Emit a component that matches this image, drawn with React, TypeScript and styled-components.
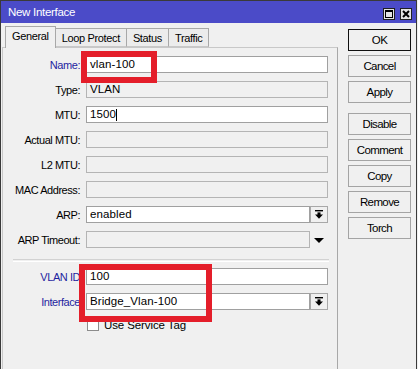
import React from "react";
import styled, { createGlobalStyle } from "styled-components";

const GlobalStyle = createGlobalStyle`
  html, body {
    margin: 0;
    padding: 0;
    background: #f0f0f0;
  }
  body {
    font-family: "Liberation Sans", Arial, sans-serif;
    font-size: 11px;
    color: #000;
  }
`;

const Window = styled.div`
  position: relative;
  width: 417px;
  height: 369px;
  box-sizing: border-box;
  border: 1px solid #3a3a3a;
  border-bottom: none;
  background: #f0f0f0;
  display: flex;
  flex-direction: column;
  overflow: hidden;
`;

const TitleBar = styled.div`
  height: 22px;
  flex-shrink: 0;
  background: #4b4bc8;
  display: flex;
  align-items: center;
  padding: 0 4px 0 7px;
  color: #fff;
  font-size: 11.5px;
  letter-spacing: -0.3px;
`;

const Title = styled.span`
  flex: 1;
`;

const TitleButtons = styled.div`
  display: flex;
  gap: 5px;
  margin-top: 3px;
`;

const TitleButton = styled.div`
  width: 12px;
  height: 12px;
  box-sizing: border-box;
  border: 1px solid #202020;
  background: #e4e4e4;
  display: flex;
  align-items: center;
  justify-content: center;
`;

const Body = styled.div`
  flex: 1;
  display: flex;
`;

const LeftPane = styled.div`
  width: 336px;
  padding-left: 1px;
  display: flex;
  flex-direction: column;
`;

const TabRow = styled.div`
  height: 24px;
  display: flex;
  align-items: flex-end;
  padding-left: 3px;
  position: relative;
  z-index: 1;
`;

const Tab = styled.div<{ $active?: boolean }>`
  height: ${(p) => (p.$active ? "22px" : "19px")};
  margin-bottom: ${(p) => (p.$active ? "-1px" : "0")};
  box-sizing: border-box;
  padding: 0 6px;
  display: flex;
  align-items: center;
  border: 1px solid #a8a8a8;
  border-left: ${(p) => (p.$active ? "1px solid #a8a8a8" : "none")};
  border-bottom: ${(p) => (p.$active ? "none" : "1px solid #c8c8c8")};
  background: ${(p) => (p.$active ? "#f0f0f0" : "#ececec")};
  letter-spacing: -0.35px;
  padding-bottom: ${(p) => (p.$active ? "3px" : "0")};
`;

const Panel = styled.div`
  flex: 1;
  box-sizing: border-box;
  border-top: 1px solid #c8c8c8;
  border-left: 1px solid #c8c8c8;
  border-right: 1px solid #a8a8a8;
  padding: 8px 8px 0 0;
  display: flex;
  flex-direction: column;
`;

const Group = styled.div`
  display: flex;
  flex-direction: column;
  gap: 8px;
`;

const Row = styled.div`
  display: grid;
  grid-template-columns: 77px 242px;
  column-gap: 6px;
  align-items: center;
  height: 17px;
`;

const Label = styled.div<{ $accent?: boolean }>`
  text-align: right;
  white-space: nowrap;
  letter-spacing: -0.45px;
  color: ${(p) => (p.$accent ? "#1f1fa0" : "#000")};
`;

const FieldGroup = styled.div`
  display: flex;
  height: 17px;
`;

const Field = styled.div<{ $disabled?: boolean }>`
  flex: 1;
  height: 17px;
  box-sizing: border-box;
  border: 1px solid ${(p) => (p.$disabled ? "#b4b4b4" : "#a0a0a0")};
  background: ${(p) => (p.$disabled ? "#f0f0f0" : "#fff")};
  padding-left: 3px;
  font-size: 11.5px;
  letter-spacing: 0.1px;
  line-height: 15px;
  white-space: nowrap;
  overflow: hidden;
  display: flex;
  align-items: center;
`;

const Caret = styled.span`
  display: inline-block;
  width: 1px;
  height: 12px;
  background: #000;
`;

const DropButton = styled.div`
  width: 18px;
  height: 17px;
  box-sizing: border-box;
  border: 1px solid #a8a8a8;
  background: #f0f0f0;
  display: flex;
  align-items: center;
  justify-content: center;
`;

const ArrowSlot = styled.div`
  width: 18px;
  height: 17px;
  display: flex;
  align-items: center;
  justify-content: center;
  padding-top: 1px;
`;

const Separator = styled.div`
  margin: 11px 0 6px 10px;
  height: 1px;
  border-top: 1px solid #d2d2d2;
  border-bottom: 1px solid #ffffff;
`;

const CheckRow = styled.div`
  display: flex;
  align-items: center;
  gap: 5px;
  margin-left: 84px;
  height: 14px;
  font-size: 11.5px;
  letter-spacing: -0.1px;
`;

const CheckBox = styled.div`
  width: 12px;
  height: 12px;
  box-sizing: border-box;
  border: 1px solid #8c8c8c;
  background: #fff;
`;

const ButtonColumn = styled.div`
  margin-left: 10px;
  padding-top: 6px;
  display: flex;
  flex-direction: column;
  gap: 4px;
`;

const Button = styled.div<{ $default?: boolean; $spaced?: boolean }>`
  width: 63px;
  height: 22px;
  box-sizing: border-box;
  border: 1px solid ${(p) => (p.$default ? "#101010" : "#a4a4a4")};
  background: #f0f0f0;
  display: flex;
  align-items: center;
  justify-content: center;
  font-size: 11.5px;
  letter-spacing: -0.6px;
  margin-top: ${(p) => (p.$spaced ? "6px" : "0")};
`;

const Highlight = styled.div<{ $x: number; $y: number; $w: number; $h: number }>`
  position: absolute;
  left: ${(p) => p.$x}px;
  top: ${(p) => p.$y}px;
  width: ${(p) => p.$w}px;
  height: ${(p) => p.$h}px;
  box-sizing: border-box;
  border: 6px solid #e41e2a;
  pointer-events: none;
`;

const ComboIcon = () => (
  <svg width="8" height="9" viewBox="0 0 8 9">
    <rect x="0" y="0" width="8" height="1.4" fill="#000" />
    <rect x="2.5" y="2.4" width="3" height="2.6" fill="#000" />
    <polygon points="0,4.6 8,4.6 4,8.8" fill="#000" />
  </svg>
);

const DownTriangle = () => (
  <svg width="10" height="5" viewBox="0 0 10 5">
    <polygon points="0,0 10,0 5,5" fill="#000" />
  </svg>
);

const MaxIcon = () => (
  <svg width="8" height="8" viewBox="0 0 8 8">
    <rect x="0.5" y="0.5" width="7" height="7" fill="none" stroke="#000" strokeWidth="1" />
    <rect x="0" y="0" width="8" height="2" fill="#000" />
  </svg>
);

const CloseIcon = () => (
  <svg width="8" height="8" viewBox="0 0 8 8">
    <path d="M1 1 L7 7 M7 1 L1 7" stroke="#000" strokeWidth="2" />
  </svg>
);

type FormRow = {
  label: string;
  value?: string;
  disabled?: boolean;
  accent?: boolean;
  combo?: "button" | "arrow";
  caret?: boolean;
};

const topRows: FormRow[] = [
  { label: "Name:", value: "vlan-100", accent: true },
  { label: "Type:", value: "VLAN", disabled: true },
  { label: "MTU:", value: "1500", caret: true },
  { label: "Actual MTU:", disabled: true },
  { label: "L2 MTU:", disabled: true },
  { label: "MAC Address:", disabled: true },
  { label: "ARP:", value: "enabled", combo: "button" },
  { label: "ARP Timeout:", disabled: true, combo: "arrow" },
];

const vlanRows: FormRow[] = [
  { label: "VLAN ID", value: "100", accent: true },
  { label: "Interface", value: "Bridge_Vlan-100", accent: true, combo: "button" },
];

const buttons = ["OK", "Cancel", "Apply", "Disable", "Comment", "Copy", "Remove", "Torch"];

const renderRow = (row: FormRow) => (
  <Row key={row.label}>
    <Label $accent={row.accent}>{row.label}</Label>
    <FieldGroup>
      <Field $disabled={row.disabled}>
        {row.value}
        {row.caret && <Caret />}
      </Field>
      {row.combo === "button" && (
        <DropButton>
          <ComboIcon />
        </DropButton>
      )}
      {row.combo === "arrow" && (
        <ArrowSlot>
          <DownTriangle />
        </ArrowSlot>
      )}
    </FieldGroup>
  </Row>
);

export default function App() {
  return (
    <>
      <GlobalStyle />
      <Window>
        <TitleBar>
          <Title>New Interface</Title>
          <TitleButtons>
            <TitleButton>
              <MaxIcon />
            </TitleButton>
            <TitleButton>
              <CloseIcon />
            </TitleButton>
          </TitleButtons>
        </TitleBar>
        <Body>
          <LeftPane>
            <TabRow>
              <Tab $active>General</Tab>
              <Tab>Loop Protect</Tab>
              <Tab>Status</Tab>
              <Tab>Traffic</Tab>
            </TabRow>
            <Panel>
              <Group>{topRows.map(renderRow)}</Group>
              <Separator />
              <Group>
                {vlanRows.map(renderRow)}
                <CheckRow>
                  <CheckBox />
                  <span>Use Service Tag</span>
                </CheckRow>
              </Group>
            </Panel>
          </LeftPane>
          <ButtonColumn>
            {buttons.map((b) => (
              <Button key={b} $default={b === "OK"} $spaced={b === "Disable"}>
                {b}
              </Button>
            ))}
          </ButtonColumn>
        </Body>
        <Highlight $x={80} $y={50} $w={76} $h={32} />
        <Highlight $x={78} $y={263} $w={133} $h={58} />
      </Window>
    </>
  );
}
